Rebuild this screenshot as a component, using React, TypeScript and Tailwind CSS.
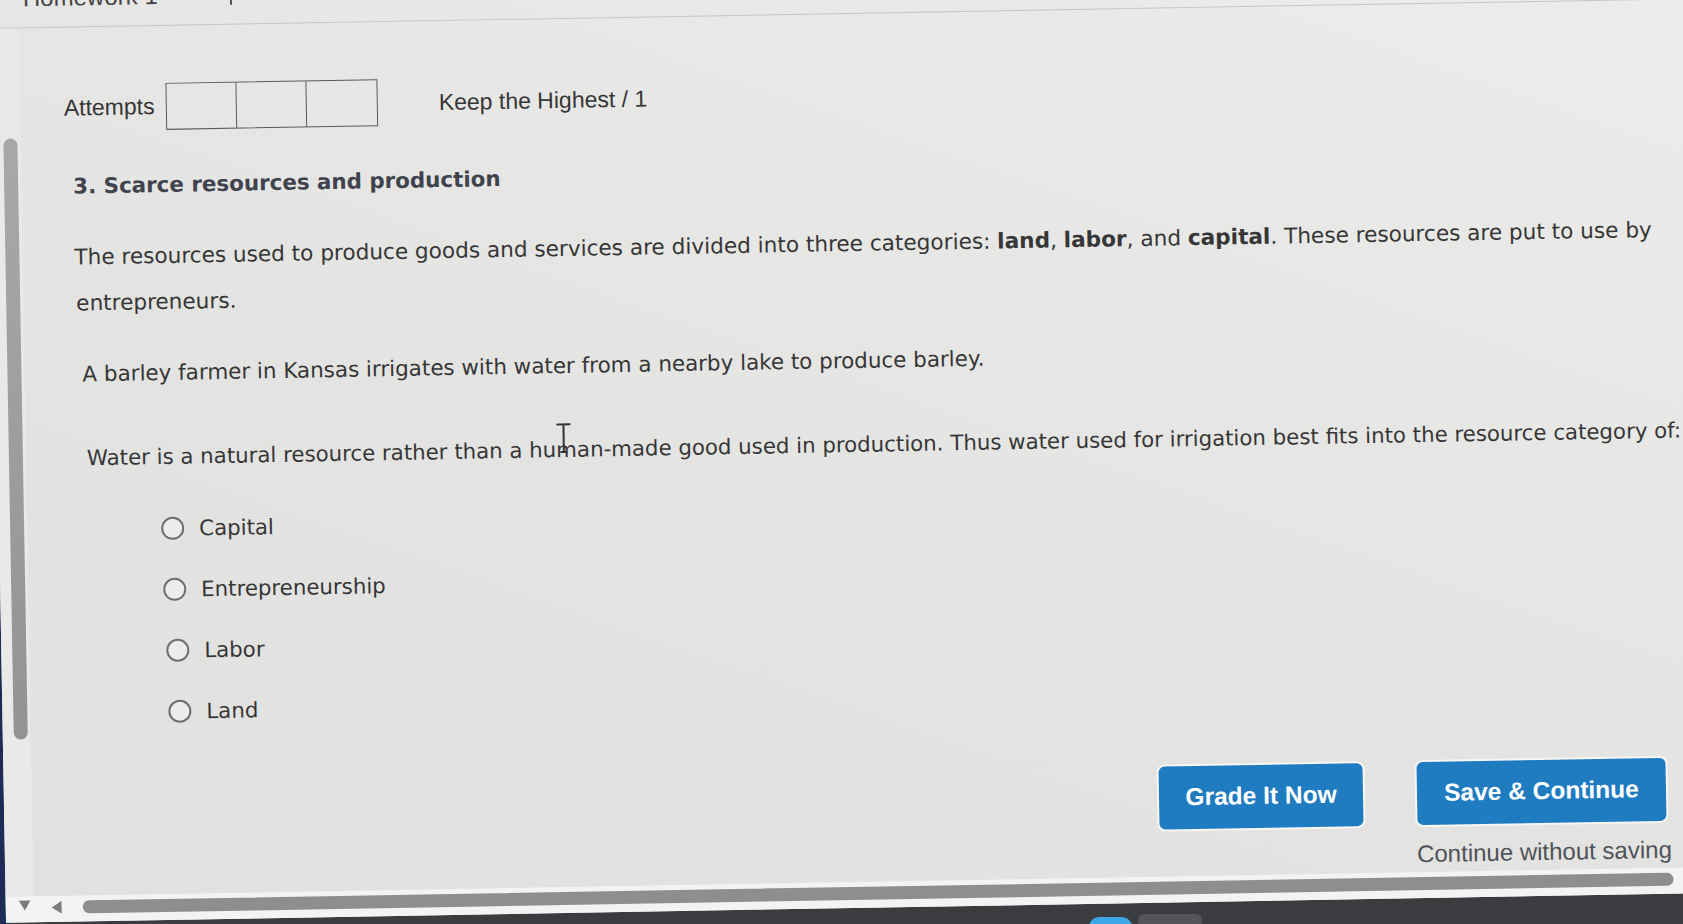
import React from "react";

const verdana = "font-['DejaVu_Sans','Verdana',sans-serif]";
const arial = "font-['Liberation_Sans','Arial',sans-serif]";

function Radio({ label, ml }: { label: string; ml: string }) {
  return (
    <div className={`h-[61px] flex items-center ${ml}`}>
      <span className="w-[23px] h-[23px] rounded-full border-2 border-[#6f6f6f] bg-[#ececea] shrink-0" />
      <span className={`ml-[15px] text-[21.3px] leading-[24px] text-[#363636] ${verdana}`}>{label}</span>
    </div>
  );
}

export default function App() {
  return (
    <div className="relative w-[1683px] h-[924px] overflow-hidden bg-[linear-gradient(90deg,#1f2b57_0px,#1f2b57_10px,#3b3c3f_10px)]">
      <div className="-ml-[2px] -mt-[20px] w-[1702px] h-[928px] rotate-[-1deg] origin-[852px_475px] bg-[linear-gradient(200deg,#ececea,#e3e3e1_60%,#e1e1df)] flex flex-col relative">
        {/* header */}
        <div className="h-[34px] shrink-0 border-b border-[#c6c6c4] flex items-start">
          <span className={`ml-[33px] -mt-[8px] w-[140px] text-[24px] leading-[24px] text-[#444] whitespace-nowrap ${arial}`}>
            Homework 1
          </span>
          <span className="ml-[67px] w-[2px] h-[14px] bg-[#555]" />
        </div>

        {/* body */}
        <div className="flex-1 flex min-h-0">
          <div className="w-[28px] shrink-0 bg-[#e9e9e7] flex flex-col">
            <div className="ml-[11px] mt-[110px] w-[14px] h-[601px] rounded-full bg-[linear-gradient(180deg,#a8a8a6,#939391)]" />
          </div>

          <div className="flex-1 flex flex-col min-w-0">
            {/* attempts row */}
            <div className={`mt-[57px] h-[47px] flex items-center ${arial}`}>
              <span className="ml-[44px] w-[102px] text-[23px] text-[#363636]">Attempts</span>
              <div className="flex h-[47px] border-[1.5px] border-[#5a5a5a]">
                <div className="w-[70px] h-full border-r-[1.5px] border-[#5a5a5a]" />
                <div className="w-[70px] h-full border-r-[1.5px] border-[#5a5a5a]" />
                <div className="w-[70px] h-full" />
              </div>
              <span className="ml-[61px] mt-[2px] text-[23px] text-[#363636] whitespace-nowrap">Keep the Highest / 1</span>
            </div>

            {/* heading */}
            <h2 className={`mt-[43px] ml-[52px] text-[21.4px] leading-[24px] font-bold text-[#3f434e] whitespace-nowrap ${verdana}`}>
              3. Scarce resources and production
            </h2>

            {/* paragraph 1 */}
            <div className={`mt-[36px] text-[21.6px] leading-[46px] text-[#363636] ${verdana}`}>
              <div className="ml-[52px] whitespace-nowrap">
                The resources used to produce goods and services are divided into three categories:{" "}
                <b>land</b>, <b>labor</b>, and <b>capital</b>. These resources are put to use by
              </div>
              <div className="ml-[53px] whitespace-nowrap">entrepreneurs.</div>
            </div>

            {/* paragraph 2 */}
            <div className={`mt-[25px] ml-[58px] text-[21.45px] leading-[46px] text-[#363636] whitespace-nowrap ${verdana}`}>
              A barley farmer in Kansas irrigates with water from a nearby lake to produce barley.
            </div>

            {/* paragraph 3 */}
            <div className={`mt-[38px] ml-[61px] text-[21.3px] leading-[46px] text-[#363636] whitespace-nowrap ${verdana}`}>
              Water is a natural resource rather than a human-made good used in production. Thus water used for irrigation best fits into the resource category of:
            </div>

            {/* options */}
            <div className="mt-[18px] flex flex-col">
              <Radio label="Capital" ml="ml-[134px]" />
              <Radio label="Entrepreneurship" ml="ml-[135px]" />
              <Radio label="Labor" ml="ml-[137px]" />
              <Radio label="Land" ml="ml-[138px]" />
            </div>

            {/* buttons */}
            <div className={`mt-[42px] flex items-start ${arial}`}>
              <button className="ml-[1127px] w-[204px] h-[63px] rounded-[6px] bg-[#1f7cc0] text-white text-[24.5px] font-bold shadow-[0_0_0_2px_#f6f6f5]">
                Grade It Now
              </button>
              <button className="ml-[54px] w-[249px] h-[63px] rounded-[6px] bg-[#1f7cc0] text-white text-[24.5px] font-bold shadow-[0_0_0_2px_#f6f6f5]">
                Save &amp; Continue
              </button>
            </div>
            <div className={`mt-[15px] ml-[1384px] text-[24px] leading-[28px] text-[#4f5358] whitespace-nowrap ${arial}`}>
              Continue without saving
            </div>
          </div>
        </div>

        {/* horizontal scrollbar */}
        <div className="h-[26px] shrink-0 bg-[#f3f3f2] flex items-start">
          <svg className="ml-[13px] mt-[4px]" width="12" height="10" viewBox="0 0 12 10">
            <path d="M0 0 H12 L6 10 Z" fill="#7b7b7b" />
          </svg>
          <svg className="ml-[21px] mt-[5px]" width="10" height="13" viewBox="0 0 10 13">
            <path d="M10 0 V13 L0 6.5 Z" fill="#7b7b7b" />
          </svg>
          <div className="ml-[21px] mt-[5px] w-[1591px] h-[13px] rounded-full bg-[#8e8e8c]" />
        </div>

        {/* text cursor */}
        <svg className="absolute left-[558px] top-[438px]" width="16" height="31" viewBox="0 0 16 31">
          <path d="M1 1.5 H15 M8 1.5 V29 M4.5 29 H11.5" stroke="#333" strokeWidth="2" fill="none" />
        </svg>
      </div>

      {/* taskbar bits */}
      <div className="absolute left-[1089px] top-[917px] w-[43px] h-[14px] rounded-t-[10px] bg-[#3ba7e6]" />
      <div className="absolute left-[1138px] top-[914px] w-[64px] h-[14px] rounded-[6px] bg-[#545558]" />
    </div>
  );
}
